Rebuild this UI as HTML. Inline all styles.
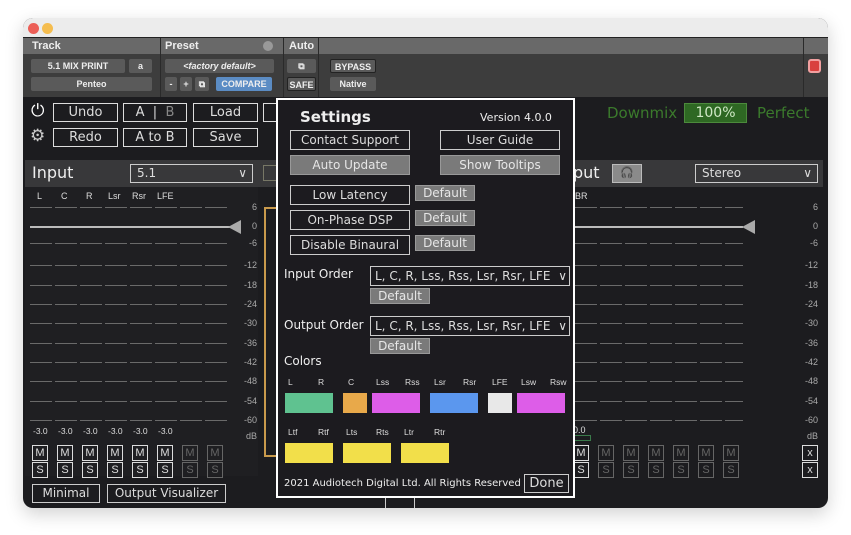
<!DOCTYPE html>
<html><head><meta charset="utf-8"><style>
*{margin:0;padding:0;box-sizing:border-box}
body{width:851px;height:535px;background:#fff;position:relative;overflow:hidden;font-family:"Liberation Sans","DejaVu Sans",sans-serif}
.a{position:absolute}
.win{left:23px;top:18px;width:805px;height:490px;border-radius:10px;overflow:hidden;background:#1c1c1f;box-shadow:0 6px 18px rgba(0,0,0,.18)}
.tb{left:0;top:0;width:805px;height:20px;background:#ececec;border-bottom:1px solid #222}
.hd{left:0;top:20px;width:805px;height:16px;background:#696969}
.tr{left:0;top:36px;width:805px;height:43px;background:#3d3d3d}
.hl{color:#eee;font-weight:bold;font-size:11px;top:22px}
.pt{background:#5a5a5a;border-radius:2px;color:#eee;font-weight:bold;font-size:9px;text-align:center;line-height:14px;height:14px}
.bx{border:1px solid #ddd;color:#ddd;text-align:center;font-size:13px;font-family:"DejaVu Sans",sans-serif}
.bx2{border:1px solid #ccc;color:#ddd;text-align:center;font-size:12px;font-family:"DejaVu Sans",sans-serif}
.gb{background:#7a7a7a;color:#e6e6e6;text-align:center;font-size:12px;border:1px solid #999;font-family:"DejaVu Sans",sans-serif}
.dl{height:1px;background:repeating-linear-gradient(90deg,#6a6a6a 0 22px,transparent 22px 25px)}
.sc{color:#aaa;font-size:9px;text-align:right;width:20px}
.ms{width:16px;height:16px;border:1px solid #ddd;color:#ddd;font-size:11px;text-align:center;line-height:14px}
.msd{border-color:#666;color:#666}
.dlg{left:276px;top:98px;width:299px;height:400px;border:2px solid #fff;background:#1c1b1f}
.t{color:#eee;font-family:"DejaVu Sans",sans-serif}
.sw{height:20px;top:393px}
.cl{color:#ddd;font-size:8.5px;top:377px}
</style></head><body>
<div class="a win">
 <div class="a tb"></div>
 <div class="a" style="left:5px;top:5px;width:11px;height:11px;border-radius:50%;background:#ec5f57"></div>
 <div class="a" style="left:19px;top:5px;width:11px;height:11px;border-radius:50%;background:#f5bd4f"></div>
 <div class="a hd"></div>
 <div class="a tr"></div>
 <div class="a" style="left:137px;top:20px;width:1px;height:59px;background:#2a2a2a"></div>
 <div class="a" style="left:260px;top:20px;width:1px;height:59px;background:#2a2a2a"></div>
 <div class="a" style="left:295px;top:20px;width:1px;height:59px;background:#2a2a2a"></div>
 <div class="a" style="left:780px;top:20px;width:1px;height:59px;background:#2a2a2a"></div>
 <div class="a hl" style="left:9px">Track</div>
 <div class="a hl" style="left:142px">Preset</div>
 <div class="a" style="left:240px;top:23px;width:10px;height:10px;border-radius:50%;background:#999"></div>
 <div class="a hl" style="left:266px">Auto</div>
 <div class="a pt" style="left:8px;top:41px;width:94px">5.1 MIX PRINT</div>
 <div class="a pt" style="left:106px;top:41px;width:23px">a</div>
 <div class="a pt" style="left:8px;top:59px;width:121px">Penteo</div>
 <div class="a pt" style="left:142px;top:41px;width:109px;font-style:italic">&lt;factory default&gt;</div>
 <div class="a pt" style="left:142px;top:59px;width:12px">-</div>
 <div class="a pt" style="left:157px;top:59px;width:12px">+</div>
 <div class="a pt" style="left:172px;top:59px;width:14px">⧉</div>
 <div class="a pt" style="left:193px;top:59px;width:56px;background:#5b8cc4">COMPARE</div>
 <div class="a pt" style="left:264px;top:41px;width:29px">⧉</div>
 <div class="a pt" style="left:264px;top:59px;width:29px;border:1px solid #222">SAFE</div>
 <div class="a pt" style="left:307px;top:41px;width:46px;border:1px solid #222">BYPASS</div>
 <div class="a pt" style="left:307px;top:59px;width:46px">Native</div>
 <div class="a" style="left:785px;top:41px;width:13px;height:14px;background:#d9413f;border-radius:3px;border:2px solid #f2a0a0"></div>

 <div class="a t" style="left:8px;top:83px;font-size:17px;color:#fff">⏻</div>
 <div class="a t" style="left:7px;top:108px;font-size:17px;color:#ccc">⚙</div>
 <div class="a bx" style="left:30px;top:85px;width:65px;height:19px;line-height:17px">Undo</div>
 <div class="a bx" style="left:30px;top:110px;width:65px;height:19px;line-height:17px">Redo</div>
 <div class="a bx" style="left:100px;top:85px;width:64px;height:19px;line-height:17px">A &nbsp;|&nbsp; <span style="color:#888">B</span></div>
 <div class="a bx" style="left:100px;top:110px;width:64px;height:19px;line-height:17px">A to B</div>
 <div class="a bx" style="left:170px;top:85px;width:65px;height:19px;line-height:17px">Load</div>
 <div class="a bx" style="left:170px;top:110px;width:65px;height:19px;line-height:17px">Save</div>
 <div class="a bx" style="left:240px;top:85px;width:30px;height:19px"></div>
 <div class="a t" style="left:584px;top:86px;font-size:15px;color:#3b7a2c">Downmix</div>
 <div class="a t" style="left:661px;top:85px;width:63px;height:20px;background:#2e6823;border:1px solid #4c8a3c;color:#cfe8c5;font-size:14px;text-align:center;line-height:18px">100%</div>
 <div class="a t" style="left:734px;top:86px;font-size:15px;color:#3b7a2c">Perfect</div>

 <div class="a" style="left:2px;top:142px;width:798px;height:27px;background:#38383a"></div>
 <div class="a t" style="left:9px;top:145px;font-size:16px">Input</div>
 <div class="a bx2" style="left:107px;top:146px;width:123px;height:19px;text-align:left;padding-left:6px;line-height:17px">5.1<span style="position:absolute;right:5px">∨</span></div>
 <div class="a" style="left:240px;top:147px;width:14px;height:16px;border:1px solid #776;"></div>
 <div class="a t" style="left:550px;top:145px;font-size:16px">put</div>
 <div class="a" style="left:589px;top:146px;width:30px;height:19px;background:#8a8a8a;border:1px solid #bbb;color:#eee;font-size:11px;text-align:center;line-height:17px">🎧</div>
 <div class="a bx2" style="left:672px;top:146px;width:123px;height:19px;text-align:left;padding-left:6px;line-height:17px">Stereo<span style="position:absolute;right:5px">∨</span></div>

 <div class="a" style="left:2px;top:169px;width:233px;height:289px;background:#1f1f22"></div>
 <div class="a" style="left:14px;top:173px;color:#ddd;font-size:9px">L</div>
 <div class="a" style="left:38px;top:173px;color:#ddd;font-size:9px">C</div>
 <div class="a" style="left:63px;top:173px;color:#ddd;font-size:9px">R</div>
 <div class="a" style="left:85px;top:173px;color:#ddd;font-size:9px">Lsr</div>
 <div class="a" style="left:109px;top:173px;color:#ddd;font-size:9px">Rsr</div>
 <div class="a" style="left:134px;top:173px;color:#ddd;font-size:9px">LFE</div>
 <div class="a" style="left:552px;top:173px;color:#ddd;font-size:9px">BR</div>
 <div id="lines"></div>
 <div class="a" style="left:7px;top:208px;width:200px;height:2px;background:#bbb"></div>
 <div class="a" style="left:205px;top:202px;width:0;height:0;border-top:7px solid transparent;border-bottom:7px solid transparent;border-right:13px solid #aaa"></div>
 <div class="a" style="left:552px;top:208px;width:168px;height:2px;background:#bbb"></div>
 <div class="a" style="left:719px;top:202px;width:0;height:0;border-top:7px solid transparent;border-bottom:7px solid transparent;border-right:13px solid #aaa"></div>
 <div class="a" style="left:241px;top:189px;width:14px;height:250px;border:2px solid #c99a4c;border-right:none"></div>
 <div class="a" style="left:550px;top:407px;color:#ddd;font-size:9px">0.0</div>
 <div class="a" style="left:550px;top:417px;width:18px;height:6px;border:1px solid #3a7a4a"></div>
 <div class="a" style="left:362px;top:478px;width:30px;height:12px;border:1px solid #ccc;border-bottom:none"></div>
 <div class="a bx2" style="left:9px;top:466px;width:68px;height:19px;line-height:17px">Minimal</div>
 <div class="a bx2" style="left:84px;top:466px;width:119px;height:19px;line-height:17px">Output Visualizer</div>
 <div class="a ms" style="left:779px;top:427px">x</div>
 <div class="a ms" style="left:779px;top:444px">x</div>
</div>

<div class="a dlg"></div>
<div class="a t" style="left:300px;top:108px;font-size:15px;font-weight:bold">Settings</div>
<div class="a t" style="left:480px;top:111px;font-size:11px">Version 4.0.0</div>
<div class="a bx2" style="left:290px;top:130px;width:120px;height:20px;line-height:18px">Contact Support</div>
<div class="a bx2" style="left:440px;top:130px;width:120px;height:20px;line-height:18px">User Guide</div>
<div class="a gb" style="left:290px;top:155px;width:120px;height:20px;line-height:18px">Auto Update</div>
<div class="a gb" style="left:440px;top:155px;width:120px;height:20px;line-height:18px">Show Tooltips</div>
<div class="a bx2" style="left:290px;top:185px;width:120px;height:20px;line-height:18px">Low Latency</div>
<div class="a bx2" style="left:290px;top:210px;width:120px;height:20px;line-height:18px">On-Phase DSP</div>
<div class="a bx2" style="left:290px;top:235px;width:120px;height:20px;line-height:18px">Disable Binaural</div>
<div class="a gb" style="left:415px;top:185px;width:60px;height:16px;line-height:14px">Default</div>
<div class="a gb" style="left:415px;top:210px;width:60px;height:16px;line-height:14px">Default</div>
<div class="a gb" style="left:415px;top:235px;width:60px;height:16px;line-height:14px">Default</div>
<div class="a t" style="left:284px;top:267px;font-size:12px">Input Order</div>
<div class="a bx2" style="left:370px;top:266px;width:200px;height:20px;line-height:18px;text-align:left;padding-left:4px;font-size:12px">L, C, R, Lss, Rss, Lsr, Rsr, LFE<span style="position:absolute;right:2px">∨</span></div>
<div class="a gb" style="left:370px;top:288px;width:60px;height:16px;line-height:14px">Default</div>
<div class="a t" style="left:284px;top:318px;font-size:12px">Output Order</div>
<div class="a bx2" style="left:370px;top:316px;width:200px;height:20px;line-height:18px;text-align:left;padding-left:4px;font-size:12px">L, C, R, Lss, Rss, Lsr, Rsr, LFE<span style="position:absolute;right:2px">∨</span></div>
<div class="a gb" style="left:370px;top:338px;width:60px;height:16px;line-height:14px">Default</div>
<div class="a t" style="left:284px;top:354px;font-size:12px">Colors</div>
<div class="a cl" style="left:288px">L</div><div class="a cl" style="left:318px">R</div>
<div class="a cl" style="left:348px">C</div>
<div class="a cl" style="left:376px">Lss</div><div class="a cl" style="left:405px">Rss</div>
<div class="a cl" style="left:434px">Lsr</div><div class="a cl" style="left:463px">Rsr</div>
<div class="a cl" style="left:492px">LFE</div>
<div class="a cl" style="left:521px">Lsw</div><div class="a cl" style="left:550px">Rsw</div>
<div class="a sw" style="left:285px;width:48px;background:#5fc290"></div>
<div class="a sw" style="left:343px;width:24px;background:#e8a94a"></div>
<div class="a sw" style="left:372px;width:48px;background:#dd5de8"></div>
<div class="a sw" style="left:430px;width:48px;background:#5b97ee"></div>
<div class="a sw" style="left:488px;width:24px;background:#e8e8e8"></div>
<div class="a sw" style="left:517px;width:48px;background:#dd5de8"></div>
<div class="a cl" style="left:288px;top:427px">Ltf</div><div class="a cl" style="left:318px;top:427px">Rtf</div>
<div class="a cl" style="left:346px;top:427px">Lts</div><div class="a cl" style="left:376px;top:427px">Rts</div>
<div class="a cl" style="left:404px;top:427px">Ltr</div><div class="a cl" style="left:434px;top:427px">Rtr</div>
<div class="a sw" style="left:285px;top:443px;width:48px;background:#f2df4a"></div>
<div class="a sw" style="left:343px;top:443px;width:48px;background:#f2df4a"></div>
<div class="a sw" style="left:401px;top:443px;width:48px;background:#f2df4a"></div>
<div class="a t" style="left:284px;top:478px;font-size:10px">2021 Audiotech Digital Ltd. All Rights Reserved</div>
<div class="a bx2" style="left:524px;top:474px;width:45px;height:19px;line-height:17px;font-size:13px">Done</div>

<script>
var h='',ys=[207,226,243,265,285,304,323,343,362,381,401,420],lb=['6','0','-6','-12','-18','-24','-30','-36','-42','-48','-54','-60'];
for(var i=0;i<ys.length;i++){var y=ys[i]-18;
if(i!=1){h+='<div class="a dl" style="left:7px;top:'+y+'px;width:200px"></div>';h+='<div class="a dl" style="left:552px;top:'+y+'px;width:168px"></div>';}
h+='<div class="a sc" style="left:214px;top:'+(y-5)+'px">'+lb[i]+'</div>';
h+='<div class="a sc" style="left:775px;top:'+(y-5)+'px">'+lb[i]+'</div>';}
h+='<div class="a sc" style="left:214px;top:413px">dB</div><div class="a sc" style="left:775px;top:413px">dB</div>';
for(var j=0;j<8;j++){var x=9+j*25;var d=j>5?' msd':'';
if(j<6)h+='<div class="a" style="left:'+(x+1)+'px;top:408px;color:#ddd;font-size:8.5px">-3.0</div>';
h+='<div class="a ms'+d+'" style="left:'+x+'px;top:427px">M</div><div class="a ms'+d+'" style="left:'+x+'px;top:444px">S</div>';}
for(var k=0;k<7;k++){var x=550+k*25;var d=k>0?' msd':'';
h+='<div class="a ms'+d+'" style="left:'+x+'px;top:427px">M</div><div class="a ms'+d+'" style="left:'+x+'px;top:444px">S</div>';}
document.getElementById('lines').innerHTML=h;
</script>
</body></html>
